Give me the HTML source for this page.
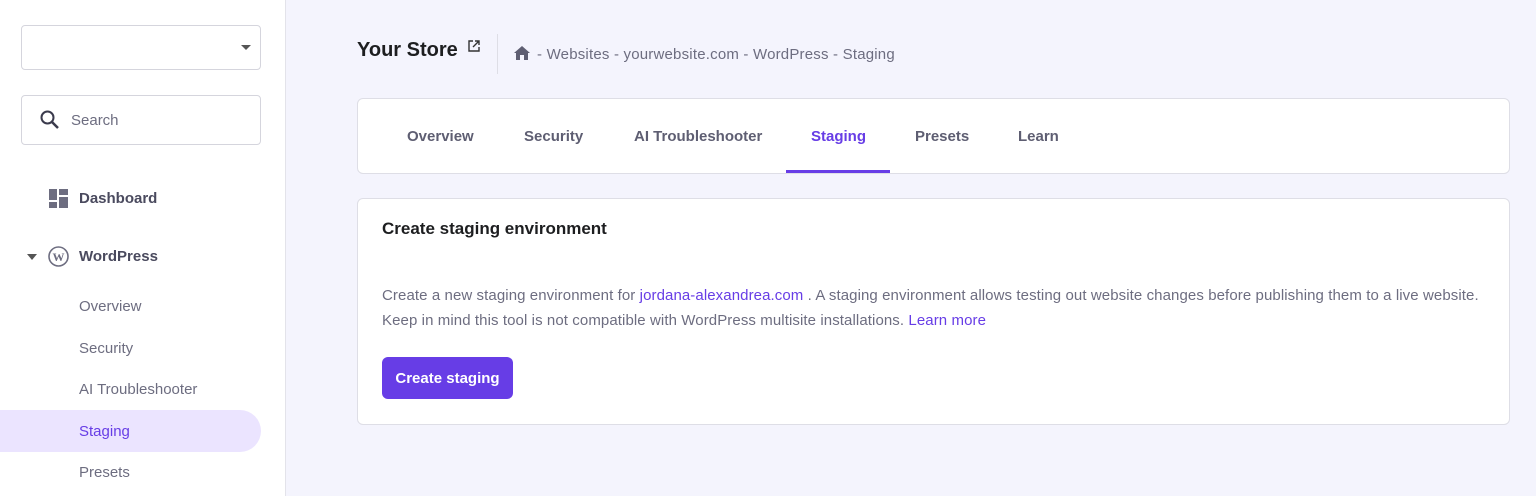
<!DOCTYPE html>
<html><head><meta charset="utf-8"><style>
*{box-sizing:border-box;margin:0;padding:0}
body{width:1536px;height:496px;overflow:hidden;font-family:"Liberation Sans",sans-serif;background:#f4f4fd;position:relative}
.side{position:absolute;left:0;top:0;width:286px;height:496px;background:#fff;border-right:1px solid #e3e3ea}
.sel{position:absolute;left:21px;top:25px;width:240px;height:45px;border:1px solid #d5d5dd;border-radius:4px}
.sel:after{content:"";position:absolute;right:9px;top:19px;border:5px solid transparent;border-top:5px solid #555}
.search{position:absolute;left:21px;top:95px;width:240px;height:50px;border:1px solid #d5d5dd;border-radius:4px;color:#6d6d80;font-size:15px;padding:16px 0 0 49px}
.t{position:absolute;font-size:15px;color:#6d6d80}
.b{font-weight:bold;color:#4a4a5e}
.act{position:absolute;left:0;top:410px;width:261px;height:42px;background:#ebe4ff;border-radius:0 21px 21px 0}
.card{position:absolute;background:#fff;border:1px solid #dedee6;border-radius:6px}
.tab{position:absolute;top:128px;font-size:15px;font-weight:bold;color:#5e5e72}
</style></head><body>
<div class="side">
<div class="sel"></div>
<div class="search">Search</div>
<svg style="position:absolute;left:39px;top:109px" width="22" height="22" viewBox="0 0 22 22"><circle cx="8.5" cy="8.5" r="6" fill="none" stroke="#3a3a4c" stroke-width="2"/><path d="M13 13l6 6" stroke="#3a3a4c" stroke-width="2.5"/></svg>
<svg style="position:absolute;left:49px;top:189px" width="19" height="19" viewBox="0 0 19 19" fill="#6d6d80"><rect x="0" y="0" width="8" height="11"/><rect x="10" y="0" width="9" height="6"/><rect x="0" y="13" width="8" height="6"/><rect x="10" y="8" width="9" height="11"/></svg>
<div class="t b" style="left:79px;top:190px">Dashboard</div>
<div style="position:absolute;left:27px;top:254px;border:5px solid transparent;border-top:6px solid #555"></div>
<svg style="position:absolute;left:48px;top:246px" width="21" height="21" viewBox="0 0 21 21"><circle cx="10.5" cy="10.5" r="9.5" fill="none" stroke="#6d6d80" stroke-width="1.6"/><text x="10.5" y="15" font-size="12" font-weight="bold" text-anchor="middle" fill="#6d6d80" font-family="Liberation Serif">W</text></svg>
<div class="t b" style="left:79px;top:248px">WordPress</div>
<div class="t" style="left:79px;top:298px">Overview</div>
<div class="t" style="left:79px;top:340px">Security</div>
<div class="t" style="left:79px;top:381px">AI Troubleshooter</div>
<div class="act"></div>
<div class="t" style="left:79px;top:423px;color:#673de6">Staging</div>
<div class="t" style="left:79px;top:464px">Presets</div>
</div>
<div style="position:absolute;left:357px;top:39px;font-size:20px;font-weight:bold;color:#1d1e20">Your Store</div>
<svg style="position:absolute;left:468px;top:40px" width="12" height="12" viewBox="0 0 12 12" fill="none" stroke="#333" stroke-width="1.4"><path d="M5 1H1v10h10V7M7 1h4v4M11 1L5 7"/></svg>
<div style="position:absolute;left:497px;top:34px;width:1px;height:40px;background:#dedee6"></div>
<svg style="position:absolute;left:514px;top:46px" width="16" height="14" viewBox="0 0 16 14" fill="#5e5e72"><path d="M8 0L0 7h2v7h4V9h4v5h4V7h2z"/></svg>
<div style="position:absolute;left:537px;top:46px;font-size:15px;color:#6d6d80;letter-spacing:0.2px">- Websites - yourwebsite.com - WordPress - Staging</div>
<div class="card" style="left:357px;top:98px;width:1153px;height:76px"></div>
<div class="tab" style="left:407px">Overview</div>
<div class="tab" style="left:524px">Security</div>
<div class="tab" style="left:634px">AI Troubleshooter</div>
<div class="tab" style="left:811px;color:#673de6">Staging</div>
<div style="position:absolute;left:786px;top:170px;width:104px;height:3px;background:#673de6"></div>
<div class="tab" style="left:915px">Presets</div>
<div class="tab" style="left:1018px">Learn</div>
<div class="card" style="left:357px;top:198px;width:1153px;height:227px"></div>
<div style="position:absolute;left:382px;top:219px;font-size:17px;font-weight:bold;color:#1d1e20">Create staging environment</div>
<div style="position:absolute;left:382px;top:283px;font-size:15px;color:#6d6d80;line-height:25px;width:1125px;letter-spacing:0.09px">Create a new staging environment for <span style="color:#673de6">jordana-alexandrea.com</span> . A staging environment allows testing out website changes before publishing them to a live website.<br>Keep in mind this tool is not compatible with WordPress multisite installations. <span style="color:#673de6">Learn more</span></div>
<div style="position:absolute;left:382px;top:357px;width:131px;height:42px;background:#673de6;border-radius:6px;color:#fff;font-size:15px;font-weight:bold;text-align:center;line-height:43px">Create staging</div>
</body></html>
